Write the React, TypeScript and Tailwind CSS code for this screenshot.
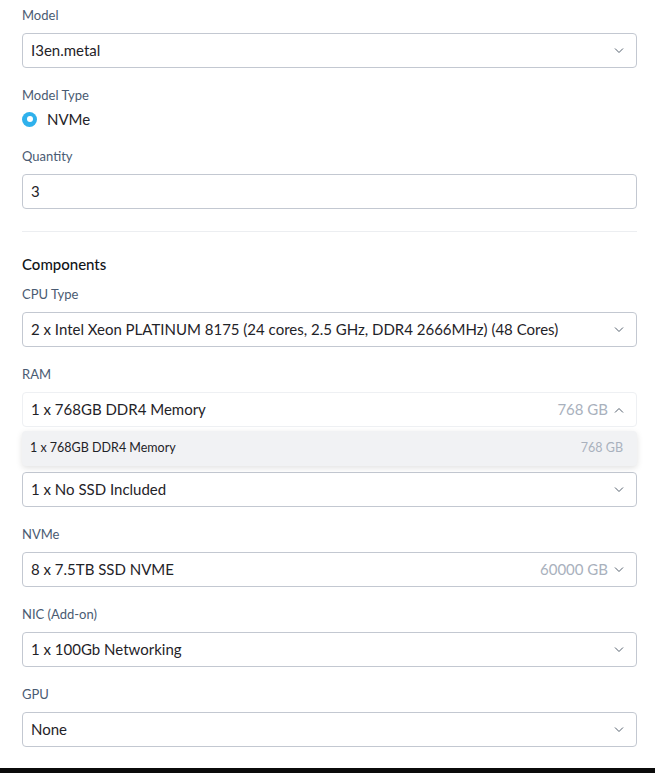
import React from "react";

const font = { fontFamily: "Lato, 'Open Sans', Arial, sans-serif" };

function Chevron({ up = false }: { up?: boolean }) {
  return (
    <svg width="10" height="6" viewBox="0 0 10 6" className="shrink-0">
      <path
        d={up ? "M1 5.5 L5 1.5 L9 5.5" : "M1 0.5 L5 4.5 L9 0.5"}
        fill="none"
        stroke="#55606e"
        strokeWidth="1"
      />
    </svg>
  );
}

function Label({ children }: { children?: React.ReactNode }) {
  return <div className="h-4 text-[13px] leading-4 text-[#4a5b72]">{children}</div>;
}

function Select({ value, extra, open = false }: { value: string; extra?: string; open?: boolean }) {
  return (
    <div
      className={`flex h-[35px] items-center rounded-[4px] border pl-[8px] pr-[12px] ${
        open ? "border-[#eef0f3]" : "border-[#c3c8d1]"
      }`}
    >
      <span className="flex-1 truncate text-[15px] text-[#1f2328]">{value}</span>
      {extra && <span className="mr-[6px] text-[15px] text-[#a9b1bd]">{extra}</span>}
      <Chevron up={open} />
    </div>
  );
}

function Field({ label, value, extra }: { label: string; value: string; extra?: string }) {
  return (
    <div className="flex flex-col gap-[10px]">
      <Label>{label}</Label>
      <Select value={value} extra={extra} />
    </div>
  );
}

export default function App() {
  return (
    <div className="flex min-h-[773px] flex-col bg-white" style={font}>
      <div className="flex flex-col pl-[22px] pr-[18px] pt-[7px]">
        <div className="flex flex-col gap-[10px]">
          <Label>Model</Label>
          <div className="flex h-[35px] items-center rounded-[4px] border border-[#c3c8d1] px-[8px] pr-[12px]">
            <span className="flex-1 text-[15px] text-[#1f2328]">I3en.metal</span>
            <Chevron />
          </div>
        </div>

        <div className="mt-[19px] flex flex-col gap-[6px]">
          <Label>Model Type</Label>
          <div className="flex h-[20px] items-center gap-[10px]">
            <span className="flex h-[15px] w-[15px] items-center justify-center rounded-full bg-[#2fb1ec]">
              <span className="h-[6px] w-[6px] rounded-full bg-white" />
            </span>
            <span className="text-[15px] text-[#1f2328]">NVMe</span>
          </div>
        </div>

        <div className="mt-[19px] flex flex-col gap-[10px]">
          <Label>Quantity</Label>
          <div className="flex h-[35px] items-center rounded-[4px] border border-[#c3c8d1] px-[8px]">
            <span className="text-[15px] text-[#1f2328]">3</span>
          </div>
        </div>

        <div className="mt-[22px] h-px bg-[#eceef1]" />

        <div className="mt-[22px] text-[15px] font-medium leading-5 text-[#111418]">Components</div>

        <div className="mt-[12px] flex flex-col gap-[10px]">
          <Label>CPU Type</Label>
          <Select value="2 x Intel Xeon PLATINUM 8175 (24 cores, 2.5 GHz, DDR4 2666MHz) (48 Cores)" />
        </div>

        <div className="mt-[19px] flex flex-col gap-[10px]">
          <Label>RAM</Label>
          <div className="relative">
            <Select value="1 x 768GB DDR4 Memory" extra="768 GB" open />
            <div className="absolute left-0 right-0 top-[39px] z-10 flex h-[35px] items-center rounded-[4px] bg-[#f1f2f4] pl-[8px] pr-[14px] shadow-[0_2px_6px_rgba(0,0,0,0.12)]">
              <span className="flex-1 text-[12.5px] text-[#1f2328]">1 x 768GB DDR4 Memory</span>
              <span className="text-[12.5px] text-[#a9b1bd]">768 GB</span>
            </div>
          </div>
        </div>

        <div className="mt-[19px] flex flex-col gap-[10px]">
          <Label />
          <Select value="1 x No SSD Included" />
        </div>

        <div className="mt-[19px]">
          <Field label="NVMe" value="8 x 7.5TB SSD NVME" extra="60000 GB" />
        </div>
        <div className="mt-[19px]">
          <Field label="NIC (Add-on)" value="1 x 100Gb Networking" />
        </div>
        <div className="mt-[19px]">
          <Field label="GPU" value="None" />
        </div>
      </div>
      <div className="flex-1" />
      <div className="h-[5px] bg-[#0b0b0b]" />
    </div>
  );
}
